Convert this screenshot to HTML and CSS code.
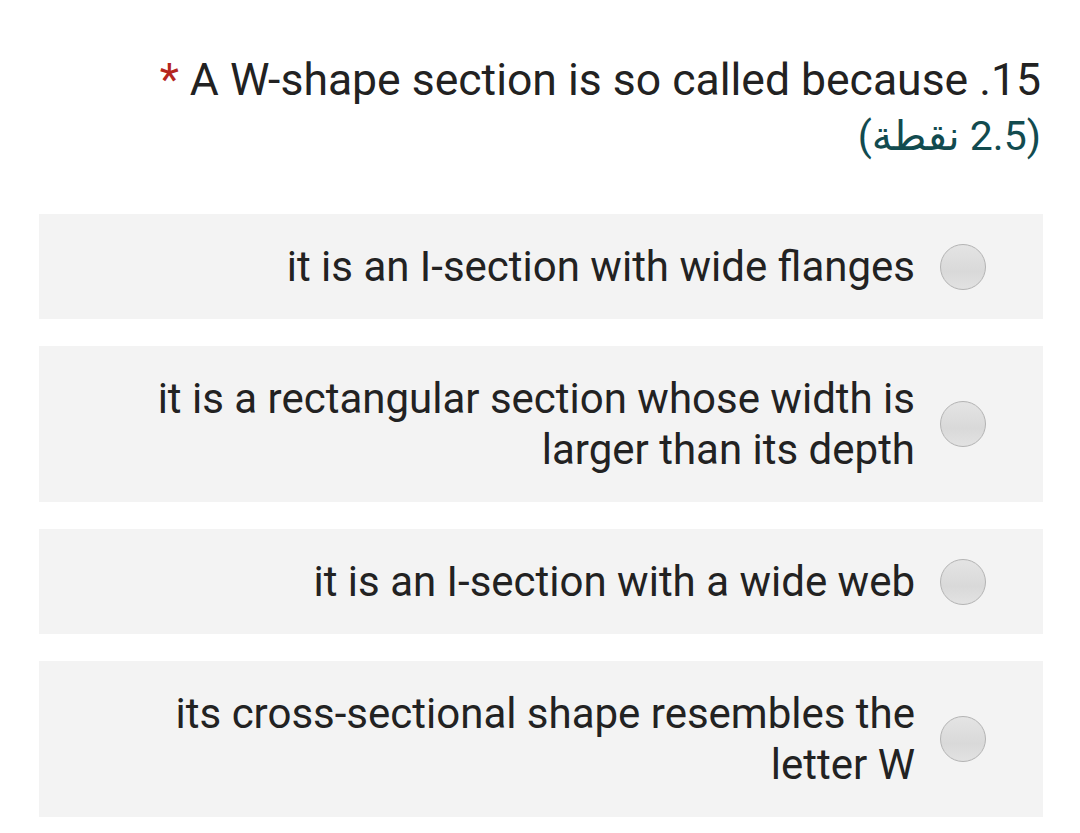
FILE: index.html
```html
<!DOCTYPE html>
<html lang="ar">
<head>
<meta charset="utf-8">
<link rel="stylesheet" href="styles.css">
</head>
<body>
<div class="question">
  <div class="title"><span class="req">*</span> A W-shape section is so called because .15</div>
  <div class="points" dir="rtl">(2.5 نقطة)</div>
</div>
<div class="options">
  <div class="option"><div class="label">it is an I-section with wide flanges</div><span class="radio"></span></div>
  <div class="option"><div class="label">it is a rectangular section whose width is<br>larger than its depth</div><span class="radio"></span></div>
  <div class="option"><div class="label">it is an I-section with a wide web</div><span class="radio"></span></div>
  <div class="option"><div class="label">its cross-sectional shape resembles the<br>letter W</div><span class="radio"></span></div>
</div>
</body>
</html>
```
FILE: styles.css
```css
html, body {
  margin: 0;
  padding: 0;
  background: #ffffff;
}
body {
  font-family: Roboto, "Noto Sans", "DejaVu Sans", sans-serif;
  color: #222222;
  width: 1080px;
  height: 833px;
  overflow: hidden;
}
.question {
  padding: 53px 39px 0 0;
  text-align: right;
}
.title {
  font-size: 44.5px;
  line-height: 55px;
  color: #222222;
}
.req {
  color: #b5261e;
}
.points {
  font-size: 41px;
  line-height: 57px;
  color: #124b4f;
  text-align: right;
}
.options {
  margin: 49px 37px 0 39px;
  display: flex;
  flex-direction: column;
  gap: 27px;
}
.option {
  background: #f3f3f3;
  display: flex;
  justify-content: flex-end;
  align-items: center;
  gap: 25px;
  padding: 27px 57px 27px 40px;
}
.label {
  font-size: 42px;
  line-height: 51px;
  text-align: right;
  color: #222222;
}
.radio {
  flex: none;
  width: 44px;
  height: 44px;
  border-radius: 50%;
  border: 1px solid #b3b3b3;
  background: linear-gradient(#e4e4e4, #d9d9d9 60%, #e2e2e2);
}
```
